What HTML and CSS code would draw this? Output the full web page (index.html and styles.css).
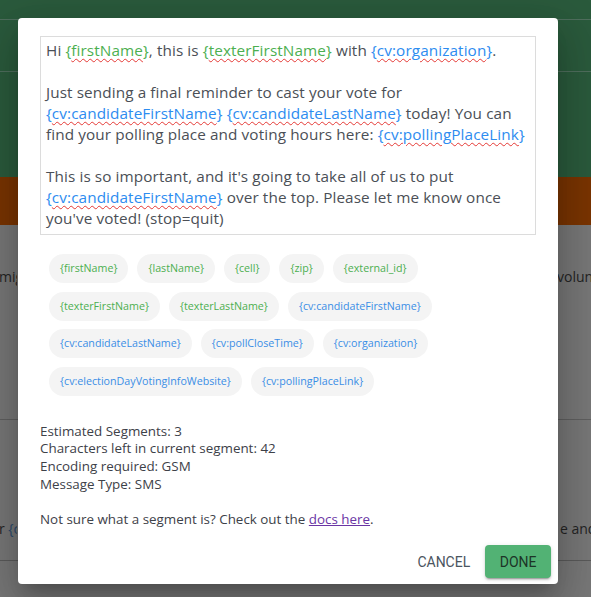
FILE: index.html
```html
<!DOCTYPE html>
<html lang="en">
<head>
<meta charset="UTF-8">
<meta name="viewport" content="width=device-width, initial-scale=1.0">
<title>Message Script</title>
<link rel="stylesheet" href="styles.css">
</head>
<body>

<!-- page behind the dialog -->
<div class="page">
  <div class="topbar"></div>
  <div class="nav"></div>
  <div class="hero"></div>
  <div class="banner"></div>
  <div class="bg-row first">
    <span class="bg-left">mig</span>
    <span class="bg-right">volunteer</span>
  </div>
  <div class="bg-row second">
    <span class="bg-left">r <span class="bg-var">{c</span></span>
    <span class="bg-right">e and</span>
  </div>
</div>

<!-- script editor dialog -->
<div class="dialog">
  <div class="dialog-body">
    <div class="editor">
      <div class="line">Hi <span class="tok green">{<u>firstName</u>}</span>, this is <span class="tok green">{<u>texterFirstName</u>}</span> with <span class="tok blue">{<u>cv:organization</u>}</span>.</div>
      <div class="line blank"></div>
      <div class="line">Just sending a final reminder to cast your vote for</div>
      <div class="line"><span class="tok blue">{<u>cv:candidateFirstName</u>}</span> <span class="tok blue">{<u>cv:candidateLastName</u>}</span> today! You can</div>
      <div class="line">find your polling place and voting hours here: <span class="tok blue">{<u>cv:pollingPlaceLink</u>}</span></div>
      <div class="line blank"></div>
      <div class="line">This is so important, and it's going to take all of us to put</div>
      <div class="line"><span class="tok blue">{<u>cv:candidateFirstName</u>}</span> over the top. Please let me know once</div>
      <div class="line">you've voted! (stop=quit)</div>
    </div>

    <div class="chips">
      <span class="chip green">{firstName}</span>
      <span class="chip green">{lastName}</span>
      <span class="chip green">{cell}</span>
      <span class="chip green">{zip}</span>
      <span class="chip green">{external_id}</span>
      <span class="chip green">{texterFirstName}</span>
      <span class="chip green">{texterLastName}</span>
      <span class="chip blue">{cv:candidateFirstName}</span>
      <span class="chip blue">{cv:candidateLastName}</span>
      <span class="chip blue">{cv:pollCloseTime}</span>
      <span class="chip blue">{cv:organization}</span>
      <span class="chip blue">{cv:electionDayVotingInfoWebsite}</span>
      <span class="chip blue">{cv:pollingPlaceLink}</span>
    </div>

    <div class="info">
      <div>Estimated Segments: 3</div>
      <div>Characters left in current segment: 42</div>
      <div>Encoding required: GSM</div>
      <div>Message Type: SMS</div>
      <div class="help">Not sure what a segment is? Check out the <a href="#">docs here</a>.</div>
    </div>
  </div>

  <div class="dialog-actions">
    <button class="btn flat">Cancel</button>
    <button class="btn primary">Done</button>
  </div>
</div>

</body>
</html>
```

FILE: styles.css
```css
body {
  margin: 0;
  width: 591px;
  height: 597px;
  overflow: hidden;
  font-family: "Open Sans", Arial, sans-serif;
  background: #777777;
  position: relative;
}

/* page behind */
.page {
  width: 591px;
}
.topbar {
  height: 19px;
  background: #2a5a3c;
  border-bottom: 1px solid #4f6e5d;
}
.nav {
  height: 51px;
  background: #2a5a3c;
  border-bottom: 1px solid #4f6e5d;
}
.hero {
  height: 105px;
  background: #2a5a3c;
}
.banner {
  height: 48px;
  background: #793400;
}
.bg-row {
  display: flex;
  white-space: nowrap;
  font-size: 14px;
  line-height: 18px;
  color: #242424;
}
.bg-row.first {
  height: 151px;
  padding-top: 43px;
  border-bottom: 1px solid #5f5f5f;
}
.bg-row.second {
  height: 40px;
  padding-top: 100px;
  border-bottom: 1px solid #5a5a5a;
}
.bg-left {
  flex: 0 0 18px;
  margin-left: -1px;
  overflow: hidden;
}
.bg-right { margin-left: 540px; }
.bg-row.second .bg-right { margin-left: 543px; }
.bg-var { color: #2c4a6b; }

/* dialog */
.dialog {
  position: absolute;
  top: 18px;
  left: 18px;
  width: 540px;
  height: 566px;
  background: #fff;
  border-radius: 4px;
  box-shadow: 0 11px 15px -7px rgba(0,0,0,0.2), 0 24px 38px 3px rgba(0,0,0,0.14), 0 9px 46px 8px rgba(0,0,0,0.12);
  display: flex;
  flex-direction: column;
  box-sizing: border-box;
}
.dialog-body {
  flex: 1;
  padding: 18px 22px 0;
}

.editor {
  border: 1px solid #dcdcdc;
  padding: 3px 5px 5px;
  font-size: 15.3px;
  letter-spacing: 0.1px;
  line-height: 21px;
  color: #4b4f56;
  white-space: nowrap;
}
.line.blank { height: 21px; }
.tok.green { color: #4caf50; }
.tok.blue { color: #2d8cf0; }
.tok u {
  text-decoration: underline wavy #e53935;
  text-decoration-thickness: 1px;
  text-underline-offset: 2px;
}

.chips {
  display: flex;
  flex-wrap: wrap;
  gap: 8.5px 9px;
  padding: 19px 0 0 9px;
}
.chip {
  height: 29px;
  line-height: 29px;
  padding: 0 11px;
  border-radius: 15px;
  background: #f4f4f4;
  font-size: 10.7px;
}
.chip.green { color: #4caf50; }
.chip.blue { color: #3a8ee6; }

.info {
  margin-top: 27px;
  font-size: 13.4px;
  line-height: 17.7px;
  color: #3d4148;
}
.info .help { margin-top: 17.7px; }
.info a { color: #6a35a4; }

.dialog-actions {
  display: flex;
  justify-content: flex-end;
  gap: 7px;
  padding: 8px 7px 6px;
}
.btn {
  font-family: Roboto, Arial, sans-serif;
  font-size: 14px;
  text-transform: uppercase;
  letter-spacing: 0;
  height: 33px;
  padding: 0 14.5px;
  border: none;
  border-radius: 4px;
  cursor: pointer;
  background: none;
}
.btn.flat { color: #4a5560; padding: 0 8px; }
.btn.primary {
  background: #52b274;
  color: #1d3527;
  box-shadow: 0 3px 1px -2px rgba(0,0,0,0.2), 0 2px 2px 0 rgba(0,0,0,0.14), 0 1px 5px 0 rgba(0,0,0,0.12);
}
```
